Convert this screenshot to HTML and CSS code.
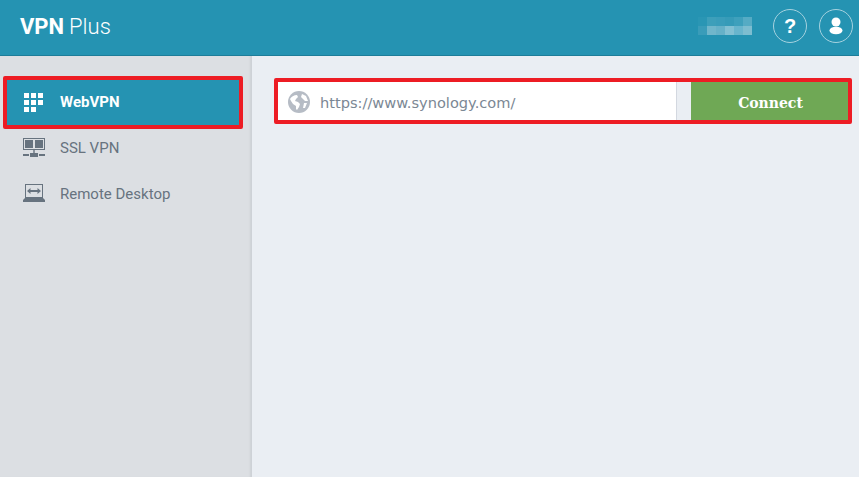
FILE: index.html
```html
<!DOCTYPE html>
<html lang="en">
<head>
<meta charset="utf-8">
<title>VPN Plus</title>
<link rel="stylesheet" href="styles.css">
</head>
<body>
<div class="app">
  <header class="topbar">
    <div class="brand"><b>VPN</b> <span>Plus</span></div>
    <div class="top-actions">
      <div class="blur" aria-hidden="true">
        <i class="b1"></i><i class="b2"></i><i class="b3"></i><i class="b4"></i><i class="b5"></i><i class="b6"></i>
        <i class="b7"></i><i class="b8"></i><i class="b9"></i><i class="b10"></i><i class="b11"></i><i class="b12"></i>
      </div>
      <button class="round-btn help">?</button>
      <button class="round-btn">
        <svg width="14" height="18" viewBox="0 0 14 18"><circle cx="7" cy="5" r="4.500" fill="#fff"/><ellipse cx="7" cy="13.500" rx="6.500" ry="3.800" fill="#fff"/></svg>
      </button>
    </div>
  </header>
  <div class="body">
    <nav class="sidebar">
      <div class="nav-item active">
        <svg class="nav-icon" width="24" height="24" viewBox="0 0 24 24" fill="#fff">
          <rect x="1" y="2" width="5" height="5"/><rect x="8" y="2" width="5" height="5"/><rect x="15" y="2" width="5" height="5"/>
          <rect x="1" y="9" width="5" height="5"/><rect x="8" y="9" width="5" height="5"/><rect x="15" y="9" width="5" height="5"/>
          <rect x="1" y="16" width="5" height="5"/><rect x="8" y="16" width="5" height="5"/>
        </svg>
        <span>WebVPN</span>
      </div>
      <div class="nav-item">
        <svg class="nav-icon" width="24" height="24" viewBox="0 0 24 24" fill="#67737f">
          <path fill-rule="evenodd" d="M0 2h22v12H0zM1 3v10h20V3z"/>
          <rect x="2" y="4" width="8" height="8"/><rect x="12" y="4" width="8" height="8"/>
          <rect x="10.300" y="14" width="1.400" height="3"/><rect x="7" y="17" width="8" height="4"/>
          <rect x="0" y="18" width="6" height="2"/><rect x="16" y="18" width="6" height="2"/>
        </svg>
        <span>SSL VPN</span>
      </div>
      <div class="nav-item">
        <svg class="nav-icon" width="24" height="24" viewBox="0 0 24 24" fill="#67737f">
          <path fill-rule="evenodd" d="M2 2h18v14H2zM3 3v12h16V3z"/>
          <path d="M2 16h18l2 2v2H0v-2z"/>
          <path d="M4 9l3.500-3v2h7V6l3.500 3-3.500 3v-2h-7v2z"/>
        </svg>
        <span>Remote Desktop</span>
      </div>
    </nav>
    <main class="content">
      <form class="url-bar">
        <div class="url-field">
          <svg class="globe" width="22" height="22" viewBox="0 0 22 22">
            <circle cx="11" cy="11" r="11" fill="#b6bcc5"/>
            <path d="M2 8c1-2 4-4 7-4l1 2-2 2-1 2 3 1 2 2-1 3-2 3-1-1 0-3-3-2-2-3z" fill="#fff"/>
            <path d="M14 3l4 2 2 5-3 0-2-2-2-2zM16 12l3 0-2 5-2 0z" fill="#fff"/>
          </svg>
          <span class="url-text">https://www.synology.com/</span>
        </div>
        <div class="url-gap"></div>
        <button class="connect" type="button">Connect</button>
      </form>
    </main>
  </div>
</div>
</body>
</html>
```
FILE: styles.css
```css
* { box-sizing: border-box; }
html, body { margin: 0; height: 100%; overflow: hidden; }
body { font-family: Roboto, sans-serif; background: #eaeef3; }
.app { display: flex; flex-direction: column; height: 477px; }
.topbar {
  height: 56px; flex: none; background: #2593b2; border-bottom: 1px solid #1d7d99;
  display: flex; align-items: center; justify-content: space-between;
  padding: 0 6px 2px 20px; color: #fff;
}
.brand { font-size: 22px; line-height: 1; display: flex; gap: 5px; }
.brand b { font-weight: 700; }
.brand span { font-weight: 300; }
.top-actions { display: flex; align-items: center; margin-bottom: 1px; }
.blur {
  display: grid; grid-template-columns: repeat(6, 9px); grid-template-rows: repeat(2, 9px);
  margin-right: 21px;
}
.b1 { background: #2a96b4; } .b2 { background: #3d9fba; } .b3 { background: #3a9dba; }
.b4 { background: #369bb8; } .b5 { background: #3ea0bc; } .b6 { background: #55abc4; }
.b7 { background: #3a9cb9; } .b8 { background: #70b6cb; } .b9 { background: #66b1c8; }
.b10 { background: #82c0d3; } .b11 { background: #68b5cd; } .b12 { background: #7dbdd0; }
.round-btn {
  width: 34px; height: 34px; border-radius: 50%; padding: 0; margin-left: 12px;
  border: 1px solid #a5d2df; background: transparent; color: #fff;
  display: flex; align-items: center; justify-content: center;
  font: 700 20px "Liberation Sans", sans-serif;
}
.round-btn.help { margin-left: 0; }
.body { flex: 1; display: flex; min-height: 0; }
.sidebar {
  width: 252px; flex: none; background: #dcdfe3; padding: 20px 8px 0 3px;
  box-shadow: inset -3px 0 2px -1px #cdd1d6;
}
.nav-item {
  height: 46px; display: flex; align-items: center; gap: 13px; padding-left: 20px;
  font-size: 15px; color: #67737f;
}
.nav-item span { margin-top: -1px; }
.nav-item.active {
  height: 53px; width: 240px; background: #2593b2; border: 4px solid #ed1c24; border-radius: 2px;
  color: #fff; font-weight: 700; padding-left: 16px; margin-bottom: -4px;
}
.nav-icon { flex: none; }
.content { flex: 1; padding: 22px 7px 0 22px; }
.url-bar {
  height: 46px; display: flex; border: 4px solid #ed1c24; border-radius: 2px; margin: 0;
  background: #eaeef3;
}
.url-field {
  flex: 1; background: #fff; display: flex; align-items: center; gap: 10px; padding: 2px 0 0 10px;
  border-right: 1px solid #d3d8e0;
}
.globe { flex: none; }
.url-text { font: 14.600px "DejaVu Sans", sans-serif; color: #7b8794; }
.url-gap { width: 14px; flex: none; background: #eaeef3; }
.connect {
  width: 157px; flex: none; border: 0; padding: 4px 0 0 2px; background: #6fa855; color: #fff;
  font: 700 14px "DejaVu Serif", serif;
}
```
